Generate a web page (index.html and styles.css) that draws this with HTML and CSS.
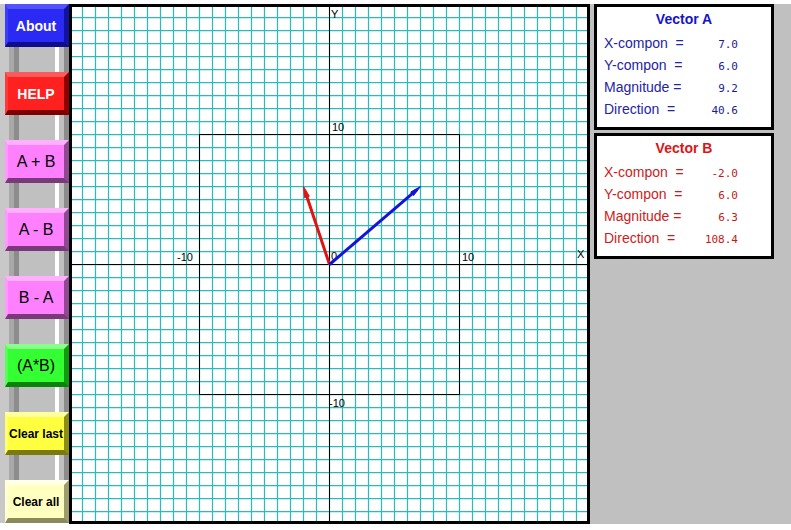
FILE: index.html
```html
<!DOCTYPE html>
<html>
<head>
<meta charset="utf-8">
<title>Vectors</title>
<link rel="stylesheet" href="styles.css">
</head>
<body>
<div class="app">
  <div class="buttons">
    <div class="btn btn-blue">About</div>
    <div class="btn btn-red">HELP</div>
    <div class="btn btn-pink">A + B</div>
    <div class="btn btn-pink">A - B</div>
    <div class="btn btn-pink">B - A</div>
    <div class="btn btn-green">(A*B)</div>
    <div class="btn btn-yellow">Clear last</div>
    <div class="btn btn-cream">Clear all</div>
  </div>
  <div class="canvas">
    <svg class="plot" width="515" height="514" viewBox="0 0 515 514">
      <defs>
        <pattern id="grid" x="4" y="4" width="13" height="13" patternUnits="userSpaceOnUse">
          <path d="M6.5 0V13M0 6.5H13" stroke="#2dbaba" stroke-width="1.25" fill="none"/>
        </pattern>
      </defs>
      <rect width="515" height="514" fill="#fff"/>
      <rect width="515" height="514" fill="url(#grid)"/>
      <path d="M257.5 0V514M0 257.5H515" stroke="#000" stroke-width="1" fill="none"/>
      <rect x="127.5" y="127.5" width="260" height="260" fill="none" stroke="#000" stroke-width="1"/>
      <g class="lbl">
        <text x="259" y="11">Y</text>
        <text x="505" y="251">X</text>
        <text x="260" y="124">10</text>
        <text x="105" y="254">-10</text>
        <text x="390" y="254">10</text>
        <text x="257" y="400">-10</text>
        <text x="259" y="253">0</text>
      </g>
      <g>
        <line x1="257.5" y1="257.5" x2="233.1" y2="184.3" stroke="#e01414" stroke-width="3"/>
        <polygon points="231.5,179.5 237.3,189.2 232.6,190.7" fill="#e01414" stroke="#e01414" stroke-width="1"/>
        <line x1="257.5" y1="257.5" x2="344.7" y2="182.8" stroke="#1414d8" stroke-width="3"/>
        <polygon points="348.5,179.5 341.6,188.5 338.7,185" fill="#1414d8" stroke="#1414d8" stroke-width="1"/>
      </g>
    </svg>
  </div>
  <div class="panel">
    <div class="vbox vbox-a">
      <div class="vtitle">Vector A</div>
      <div class="vrow"><span class="vlbl">X-compon  =</span><span class="vval">7.0</span></div>
      <div class="vrow"><span class="vlbl">Y-compon  =</span><span class="vval">6.0</span></div>
      <div class="vrow"><span class="vlbl">Magnitude =</span><span class="vval">9.2</span></div>
      <div class="vrow"><span class="vlbl">Direction  =</span><span class="vval">40.6</span></div>
    </div>
    <div class="vbox vbox-b">
      <div class="vtitle">Vector B</div>
      <div class="vrow"><span class="vlbl">X-compon  =</span><span class="vval">-2.0</span></div>
      <div class="vrow"><span class="vlbl">Y-compon  =</span><span class="vval">6.0</span></div>
      <div class="vrow"><span class="vlbl">Magnitude =</span><span class="vval">6.3</span></div>
      <div class="vrow"><span class="vlbl">Direction  =</span><span class="vval">108.4</span></div>
    </div>
  </div>
</div>
</body>
</html>
```

FILE: styles.css
```css
html, body {
  margin: 0;
  padding: 0;
  background: #ffffff;
  font-family: "Liberation Sans", Arial, sans-serif;
}

.app {
  display: flex;
  margin-top: 4px;
  height: 520px;
}

.buttons {
  flex: none;
  width: 69px;
  height: 519px;
  display: flex;
  flex-direction: column;
  align-items: flex-end;
  gap: 25px;
  background: linear-gradient(to right,
    #c8c8c8 0 9px,
    #a9a9a9 9px 14px,
    #8c8c8c 14px 19px,
    #c0c0c0 19px 55px,
    #ffffff 55px 59px,
    #c0c0c0 59px 64px,
    #8c8c8c 64px 69px);
}

.btn {
  box-sizing: border-box;
  width: 64px;
  height: 43px;
  border-style: solid;
  border-width: 5px 5px 5px 3px;
  display: flex;
  align-items: center;
  justify-content: center;
  font-size: 16px;
  color: #000;
  white-space: nowrap;
}

.btn-blue {
  background: #2a2af4;
  border-color: #5454ff #1212a0 #0e0e8a #3c3cff;
  color: #fff;
  font-weight: bold;
  font-size: 14px;
}

.btn-red {
  background: #ff2020;
  border-color: #ff5a5a #900000 #7c0000 #ff3a3a;
  color: #fff;
  font-weight: bold;
  font-size: 14px;
}

.btn-pink {
  background: #ff80ff;
  border-color: #ffb0ff #904890 #7a3a7a #ff98ff;
  font-size: 16px;
}

.btn-green {
  background: #33ff33;
  border-color: #88ff88 #0f9a0f #0c800c #55ff55;
  font-size: 16px;
}

.btn-yellow {
  background: #ffff40;
  border-color: #ffffa0 #8c8c18 #7a7a10 #ffff70;
  font-weight: bold;
  font-size: 12px;
}

.btn-cream {
  background: #ffffc0;
  border-color: #ffffe6 #9c9c6c #8a8a5c #ffffd4;
  font-weight: bold;
  font-size: 12px;
}

.canvas {
  flex: none;
  width: 515px;
  height: 514px;
  border: 3px solid #000;
  background: #fff;
}

.plot {
  display: block;
}

.lbl text {
  font-family: "Liberation Sans", Arial, sans-serif;
  font-size: 11px;
  fill: #000;
}

.panel {
  flex: 1;
  background: #c0c0c0;
  padding-left: 4px;
  display: flex;
  flex-direction: column;
  gap: 3px;
}

.vbox {
  box-sizing: border-box;
  width: 180px;
  height: 126px;
  border: 3px solid #000;
  background: #fff;
  padding-top: 1px;
}

.vtitle {
  font-weight: bold;
  font-size: 14px;
  line-height: 22px;
  height: 22px;
  text-align: center;
  margin-bottom: 2px;
}

.vrow {
  display: flex;
  justify-content: space-between;
  align-items: baseline;
  margin-left: 7px;
  width: 134px;
  height: 22px;
  font-size: 14px;
  line-height: 22px;
  overflow: hidden;
}

.vlbl {
  white-space: pre;
}

.vval {
  font-family: "DejaVu Sans Mono", monospace;
  font-size: 11px;
  line-height: 14px;
}

.vbox-a .vtitle { color: #1414cc; }
.vbox-a .vlbl { color: #2424a8; }
.vbox-a .vval { color: #1a1a96; }

.vbox-b .vtitle { color: #dd1414; }
.vbox-b .vlbl { color: #cc1c1c; }
.vbox-b .vval { color: #c41818; }
```
